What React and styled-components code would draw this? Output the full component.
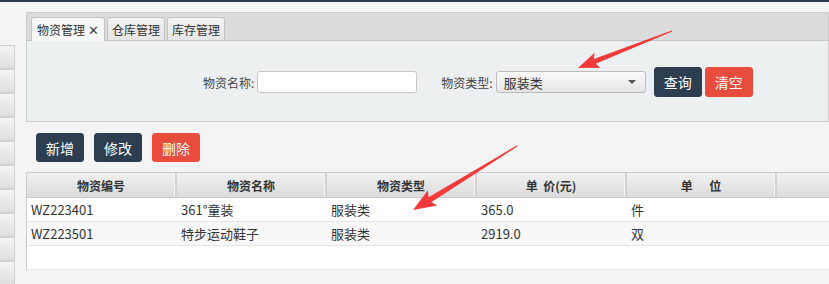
import React from "react";
import styled, { createGlobalStyle } from "styled-components";

const GlobalStyle = createGlobalStyle`
  html, body {
    margin: 0;
    padding: 0;
    background: #f4f4f4;
    font-family: "Noto Sans CJK SC", "Noto Sans", sans-serif;
    font-size: 13px;
    color: #333;
  }
`;

const Page = styled.div`
  position: relative;
  width: 829px;
  height: 284px;
  overflow: hidden;
  background: #f4f4f4;
`;

const TopBar = styled.div`
  height: 2px;
  background: #2c3e50;
`;

const Body = styled.div`
  display: flex;
`;

const SideStrip = styled.div`
  width: 15px;
  padding-top: 43px;
  display: flex;
  flex-direction: column;
`;

const SideItem = styled.div`
  height: 22px;
  border: 1px solid #cfcfcf;
  border-left: none;
  background: linear-gradient(#f4f4f4, #dedede);
`;

const Main = styled.div`
  flex: 1;
  margin-left: 11px;
  padding-top: 10px;
  min-width: 0;
`;

const TabHeader = styled.div`
  height: 29px;
  box-sizing: border-box;
  background: #dcdcdc;
  border: 1px solid #cccccc;
  border-bottom: 1px solid #c4c4c4;
  display: flex;
  align-items: flex-end;
  gap: 2px;
  padding-left: 4px;
`;

const Tab = styled.div`
  box-sizing: border-box;
  padding: 0 ${(p) => (p.active ? "5px" : "4px")};
  display: flex;
  align-items: center;
  gap: 3px;
  border: 1px solid #c4c4c4;
  border-bottom: none;
  border-radius: 3px 3px 0 0;
  background: ${(p) => (p.active ? "#f6f7f7" : "linear-gradient(#f2f2f2, #e6e6e6)")};
  color: #333;
  font-size: 12px;
  margin-bottom: ${(p) => (p.active ? "-1px" : "0")};
  height: ${(p) => (p.active ? "24px" : "23px")};
`;

const Close = styled.span`
  font-size: 13px;
  color: #444;
`;

const SearchPanel = styled.div`
  height: 81px;
  box-sizing: border-box;
  background: #edf0f1;
  border: 1px solid #cccccc;
  border-top: none;
  display: flex;
  align-items: center;
  padding-left: 176px;
  padding-top: 2px;
`;

const Label = styled.label`
  font-size: 12px;
  color: #444;
  margin-right: 3px;
  margin-left: ${(p) => p.gap || 0}px;
`;

const TextInput = styled.div`
  width: 160px;
  height: 22px;
  box-sizing: border-box;
  background: #fff;
  border: 1px solid #c6c6c6;
  border-radius: 3px;
`;

const Select = styled.div`
  width: 150px;
  height: 22px;
  box-sizing: border-box;
  background: linear-gradient(#fbfbfb, #e4e4e4);
  border: 1px solid #bcbcbc;
  border-radius: 3px;
  display: flex;
  align-items: center;
  justify-content: space-between;
  padding: 0 9px 0 7px;
  font-size: 13px;
  color: #333;
`;

const Caret = styled.span`
  width: 0;
  height: 0;
  border-left: 4px solid transparent;
  border-right: 4px solid transparent;
  border-top: 4px solid #555;
`;

const Btn = styled.button`
  width: 48px;
  height: ${(p) => p.h || 29}px;
  border: 1px solid ${(p) => (p.red ? "#e74c3c" : "#2c3e50")};
  border-radius: 3px;
  background: ${(p) => (p.red ? "#e74c3c" : "#2c3e50")};
  color: #fff;
  font-family: inherit;
  font-size: 14px;
  padding: 0;
  margin-left: ${(p) => p.ml || 0}px;
  cursor: pointer;
`;

const ActionRow = styled.div`
  display: flex;
  gap: 10px;
  padding: 11px 0 10px 10px;
`;

const Grid = styled.div`
  border-left: 1px solid #cccccc;
  border-top: 1px solid #cccccc;
  width: 900px;
`;

const HeadRow = styled.div`
  display: grid;
  grid-template-columns: repeat(6, 150px);
  height: 24px;
  background: linear-gradient(#f0f0f0, #dcdcdc);
  border-bottom: 1px solid #c8c8c8;
`;

const HeadCell = styled.div`
  display: flex;
  align-items: center;
  justify-content: center;
  font-weight: bold;
  font-size: 12px;
  color: #333;
  border-right: 2px solid #d2d2d2;
  box-shadow: inset -1px 0 0 #f4f4f4;
  white-space: pre;
`;

const Row = styled.div`
  display: grid;
  grid-template-columns: repeat(6, 150px);
  height: 23px;
  background: ${(p) => (p.alt ? "#f8f8f8" : "#ffffff")};
  border-bottom: 1px solid #e6e6e6;
`;

const Cell = styled.div`
  display: flex;
  align-items: center;
  padding-left: 4px;
  font-size: 13px;
  color: #333;
`;

const Overlay = styled.svg`
  position: absolute;
  left: 0;
  top: 0;
  pointer-events: none;
`;

// red annotation arrow, tail -> tip
const arrowPoints = (tx, ty, px, py, headLen, headW, shaftW) => {
  const dx = px - tx;
  const dy = py - ty;
  const len = Math.hypot(dx, dy);
  const ux = dx / len;
  const uy = dy / len;
  const nx = -uy;
  const ny = ux;
  const bx = px - ux * headLen;
  const by = py - uy * headLen;
  const pts = [
    [tx + nx * 0.6, ty + ny * 0.6],
    [bx + nx * shaftW, by + ny * shaftW],
    [bx + nx * headW - ux * 3, by + ny * headW - uy * 3],
    [px, py],
    [bx - nx * headW - ux * 3, by - ny * headW - uy * 3],
    [bx - nx * shaftW, by - ny * shaftW],
    [tx - nx * 0.6, ty - ny * 0.6],
  ];
  return pts.map((p) => p.join(",")).join(" ");
};

const columns = ["物资编号", "物资名称", "物资类型", "单  价(元)", "单      位", ""];
const rows = [
  ["WZ223401", "361°童装", "服装类", "365.0", "件", ""],
  ["WZ223501", "特步运动鞋子", "服装类", "2919.0", "双", ""],
  ["", "", "", "", "", ""],
];

export default function App() {
  return (
    <Page>
      <GlobalStyle />
      <TopBar />
      <Body>
        <SideStrip>
          {[0, 1, 2, 3, 4, 5, 6, 7, 8, 9].map((i) => (
            <SideItem key={i} />
          ))}
        </SideStrip>
        <Main>
          <TabHeader>
            <Tab active>
              物资管理<Close>✕</Close>
            </Tab>
            <Tab>仓库管理</Tab>
            <Tab>库存管理</Tab>
          </TabHeader>
          <SearchPanel>
            <Label>物资名称:</Label>
            <TextInput />
            <Label gap={24}>物资类型:</Label>
            <Select>
              服装类
              <Caret />
            </Select>
            <Btn h={30} ml={8}>查询</Btn>
            <Btn h={30} ml={3} red>清空</Btn>
          </SearchPanel>
          <ActionRow>
            <Btn>新增</Btn>
            <Btn>修改</Btn>
            <Btn red>删除</Btn>
          </ActionRow>
          <Grid>
            <HeadRow>
              {columns.map((c, i) => (
                <HeadCell key={i}>{c}</HeadCell>
              ))}
            </HeadRow>
            {rows.map((r, i) => (
              <Row key={i} alt={i === 1}>
                {r.map((c, j) => (
                  <Cell key={j}>{c}</Cell>
                ))}
              </Row>
            ))}
          </Grid>
        </Main>
      </Body>
      <Overlay width="829" height="284">
        <polygon points={arrowPoints(672, 31, 578, 68, 18, 8, 2.6)} fill="#f23a3a" />
        <polygon points={arrowPoints(517, 146, 413, 210, 20, 9, 2.8)} fill="#f23a3a" />
      </Overlay>
    </Page>
  );
}
